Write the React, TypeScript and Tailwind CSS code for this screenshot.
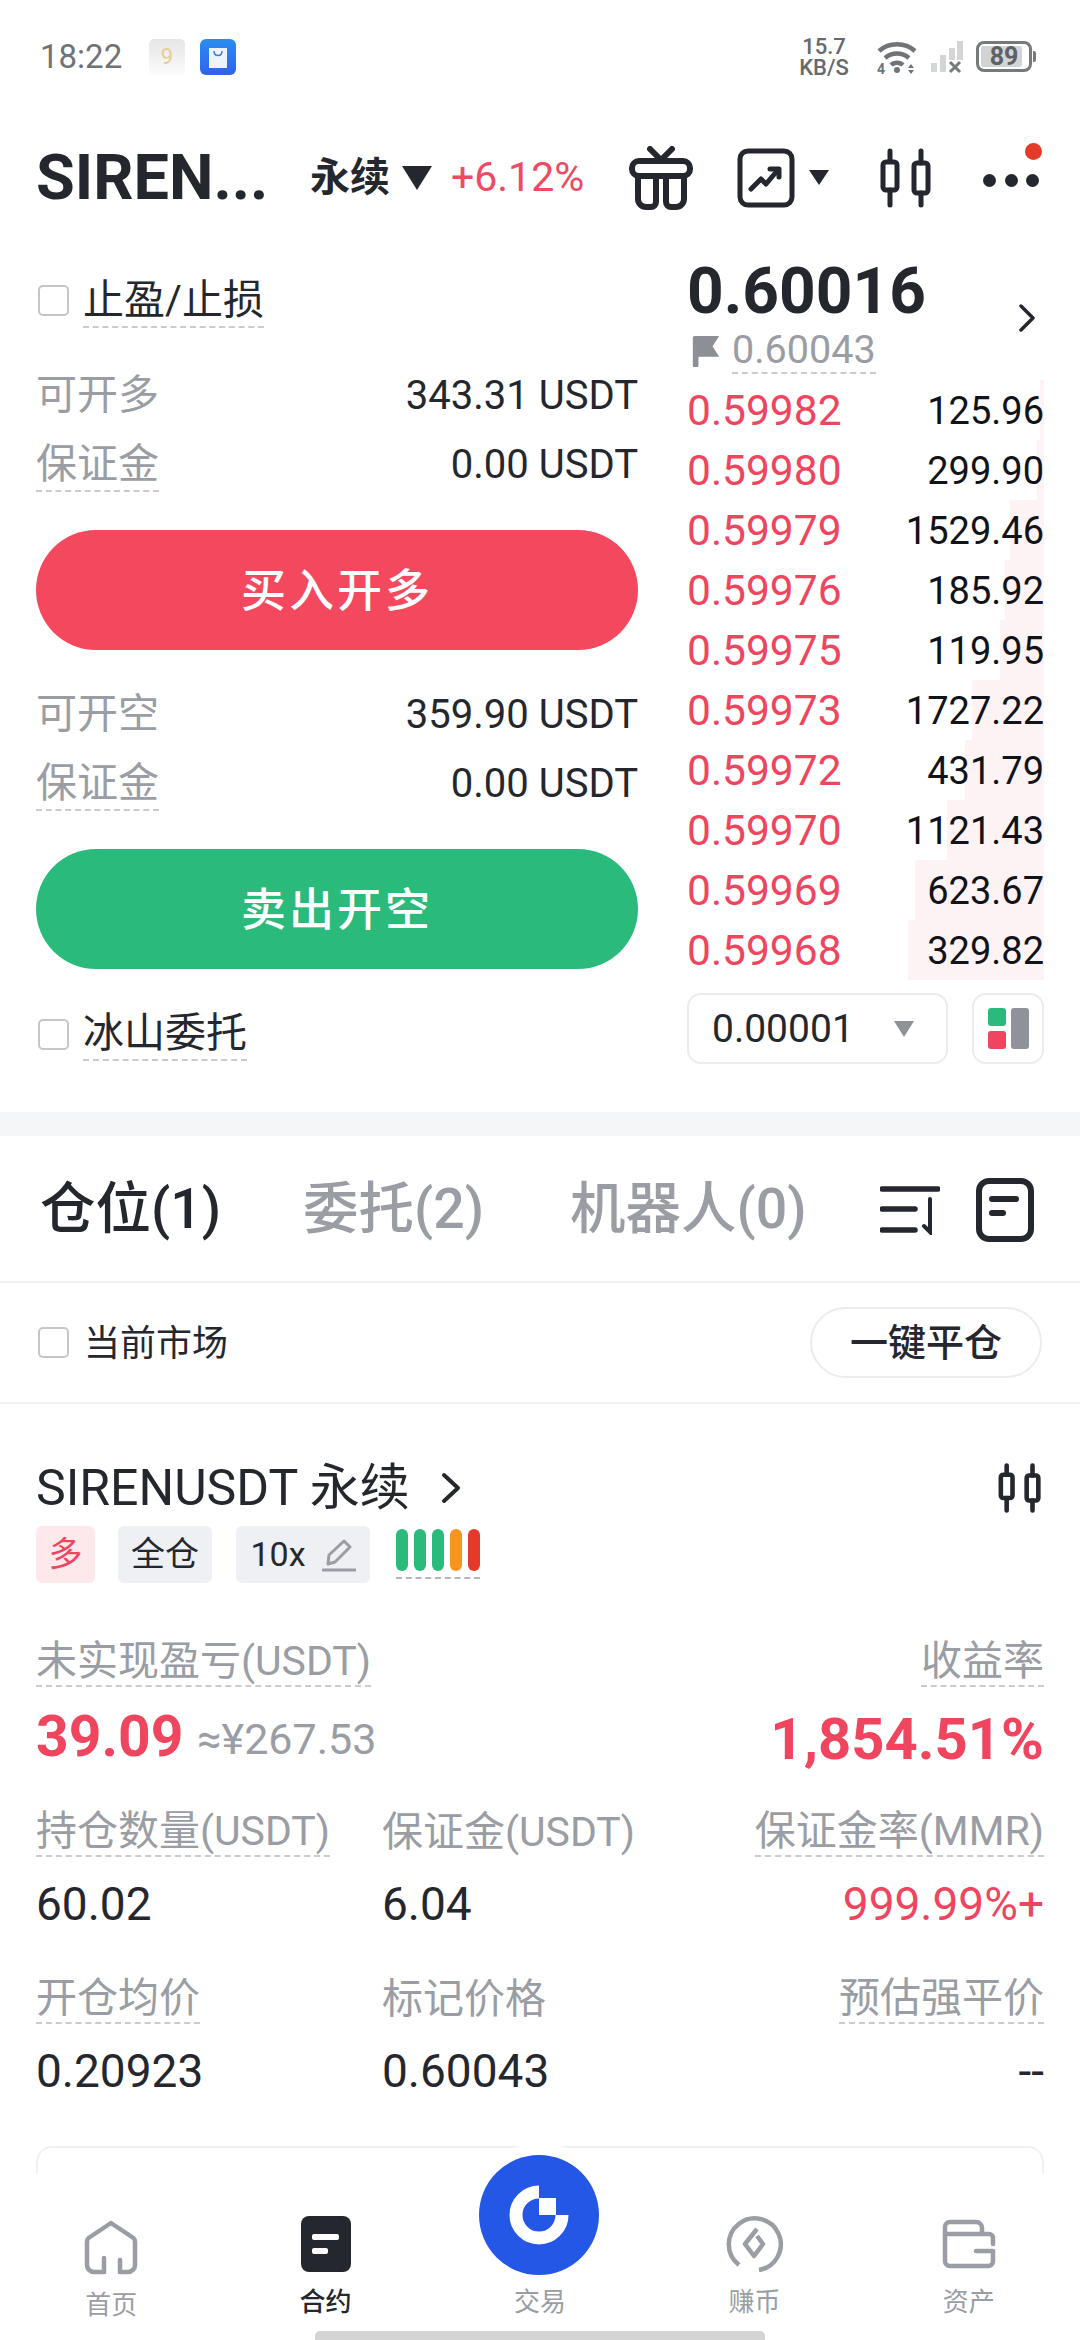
import React from 'react';

const asks = [
  { price: '0.59982', size: '125.96', depth: 4 },
  { price: '0.59980', size: '299.90', depth: 7 },
  { price: '0.59979', size: '1529.46', depth: 34 },
  { price: '0.59976', size: '185.92', depth: 39 },
  { price: '0.59975', size: '119.95', depth: 44 },
  { price: '0.59973', size: '1727.22', depth: 72 },
  { price: '0.59972', size: '431.79', depth: 79 },
  { price: '0.59970', size: '1121.43', depth: 97 },
  { price: '0.59969', size: '623.67', depth: 129 },
  { price: '0.59968', size: '329.82', depth: 136 },
];

function Candles({ className, sw = 5 }: { className: string; sw?: number }) {
  return (
    <svg viewBox="0 0 54 60" className={className} fill="none" stroke="#25272e" strokeWidth={sw} strokeLinecap="round" strokeLinejoin="round">
      <path d="M11 3v10M11 42v15M42 3v12M42 45v12" />
      <rect x="4" y="14" width="14" height="28" rx="3" />
      <rect x="35" y="15" width="14" height="30" rx="3" />
    </svg>
  );
}

function Checkbox() {
  return <span className="block h-[31px] w-[31px] shrink-0 rounded-[5px] border-2 border-[#c4c6c9]" />;
}

function Dashed({ children, className = '' }: { children: React.ReactNode; className?: string }) {
  return <span className={`border-b-2 border-dashed border-[#c9cbce] ${className}`}>{children}</span>;
}

function Stat({ label, value, right, red, dashed = true }: { label: string; value: string; right?: boolean; red?: boolean; dashed?: boolean }) {
  return (
    <div className={`flex flex-col ${right ? 'items-end' : 'items-start'}`}>
      <span className="flex h-[48px] items-center">
        {dashed ? (
          <Dashed className="text-[41px] leading-[48px] text-[#9a9da3]">{label}</Dashed>
        ) : (
          <span className="text-[41px] leading-[48px] text-[#9a9da3]">{label}</span>
        )}
      </span>
      <span className={`mt-[23px] h-[50px] text-[46px] leading-[50px] ${red ? 'text-[#f0455f]' : 'text-[#25272e]'}`}>{value}</span>
    </div>
  );
}

function TradeSide({ avail, availLabel, action, color }: { avail: string; availLabel: string; action: string; color: string }) {
  return (
    <>
      <div className="flex h-[70px] items-center justify-between">
        <span className="text-[41px] text-[#9a9da3]">{availLabel}</span>
        <span className="text-[40px] text-[#25272e]">{avail} USDT</span>
      </div>
      <div className="flex h-[68px] items-center justify-between">
        <Dashed className="text-[41px] leading-[52px] text-[#9a9da3]">保证金</Dashed>
        <span className="text-[40px] text-[#25272e]">0.00 USDT</span>
      </div>
      <button className={`mt-[31px] h-[120px] w-full rounded-full pt-[3px] text-[45px] font-medium tracking-[3px] text-white ${color}`}>{action}</button>
    </>
  );
}

function NavItem({ label, active, children, low }: { label: string; active?: boolean; children?: React.ReactNode; low?: boolean }) {
  return (
    <div className="flex flex-col items-center">
      <div className="flex h-[68px] items-center justify-center">{children}</div>
      <span className={`text-[26px] leading-[32px] ${low ? 'mt-[11px]' : 'mt-[8px]'} ${active ? 'font-medium text-[#25272e]' : 'text-[#9a9da3]'}`}>{label}</span>
    </div>
  );
}

export default function App() {
  return (
    <div className="relative h-[2340px] w-[1080px] overflow-hidden bg-white font-[Roboto,'Noto_Sans_CJK_SC',sans-serif] text-[#25272e]">
      {/* status bar */}
      <div className="flex h-[95px] items-center justify-between pl-[40px] pr-[48px] pt-[18px]">
        <div className="flex items-center">
          <span className="w-[109px] text-[33px] text-[#6f7277]">18:22</span>
          <div className="flex h-[36px] w-[36px] items-center justify-center rounded-[5px] bg-gradient-to-b from-[#e6e6e6] to-[#fbfbfb] text-[22px] leading-none text-[#e3cf94]">9</div>
          <div className="ml-[15px] flex h-[36px] w-[36px] items-center justify-center rounded-[6px] bg-gradient-to-b from-[#2b8df0] to-[#2f62e8]">
            <svg viewBox="0 0 20 24" className="h-[24px] w-[20px]">
              <path d="M1 3h18v20H1z" fill="#eef3fb" />
              <path d="M6 6c0 6 8 6 8 0" stroke="#3a78e8" strokeWidth="1.5" fill="none" />
            </svg>
          </div>
        </div>
        <div className="flex items-center">
          <div className="flex w-[54px] flex-col items-center text-[22px] font-medium leading-[21px] text-[#66696e]">
            <span>15.7</span>
            <span>KB/S</span>
          </div>
          <div className="relative ml-[26px] h-[34px] w-[40px]">
            <svg viewBox="0 0 40 34" className="h-[34px] w-[40px]" fill="none" stroke="#707378" strokeWidth="4.5">
              <path d="M2 11c10-9 26-9 36 0M8 18c7-6 17-6 24 0M14 25c3-3 9-3 12 0" />
              <circle cx="20" cy="30" r="3" fill="#707378" stroke="none" />
              <path d="M34 24l3 4h-6zM34 34l3-4h-6z" fill="#707378" stroke="none" />
            </svg>
            <span className="absolute bottom-[-2px] left-0 text-[14px] font-bold leading-none text-[#707378]">4</span>
          </div>
          <svg viewBox="0 0 34 34" className="ml-[13px] h-[34px] w-[34px]">
            <rect x="1" y="23" width="6" height="9" fill="#d4d5d7" />
            <rect x="10" y="15" width="6" height="17" fill="#d4d5d7" />
            <rect x="19" y="8" width="6" height="12" fill="#d4d5d7" />
            <rect x="27" y="1" width="6" height="19" fill="#d4d5d7" />
            <path d="M20 22l10 10M30 22l-10 10" stroke="#77797d" strokeWidth="3" />
          </svg>
          <div className="relative ml-[12px] flex h-[31px] w-[56px] items-center rounded-[8px] border-[3px] border-[#77797d] p-[2px]">
            <div className="h-full w-[89%] rounded-[3px] bg-[#d2d3d5]" />
            <span className="absolute inset-0 flex items-center justify-center text-[25px] font-bold leading-none text-[#5e6065]">89</span>
            <span className="absolute -right-[7px] top-[7px] h-[11px] w-[3px] rounded-r-[2px] bg-[#77797d]" />
          </div>
        </div>
      </div>

      {/* symbol header */}
      <div className="flex h-[145px] items-center pl-[36px] pt-[20px]">
        <span className="w-[274px] text-[63px] font-bold leading-none">SIREN...</span>
        <span className="text-[40px] font-bold">永续</span>
        <svg viewBox="0 0 30 24" className="ml-[12px] h-[24px] w-[30px]"><path d="M0 0h30L15 24z" fill="#25272e" /></svg>
        <span className="ml-[19px] w-[176px] text-[41px] text-[#ee4a64]">+6.12%</span>
        <svg viewBox="0 0 64 64" className="ml-[2px] h-[64px] w-[64px]" fill="none" stroke="#25272e" strokeWidth="6" strokeLinecap="round" strokeLinejoin="round">
          <path d="M21 3l11 11 11-11" />
          <rect x="3" y="15" width="58" height="15" rx="7" />
          <path d="M9 30v23a8 8 0 0 0 8 8h5a5 5 0 0 0 5-5V30M55 30v23a8 8 0 0 1-8 8h-5a5 5 0 0 1-5-5V30" />
        </svg>
        <svg viewBox="0 0 58 60" className="ml-[44px] h-[60px] w-[58px]" fill="none" stroke="#25272e" strokeWidth="5" strokeLinejoin="round" strokeLinecap="round">
          <rect x="3" y="3" width="52" height="54" rx="8" />
          <path d="M14 41l10-10 5 5 11-13" />
          <path d="M33 21h9v8" />
        </svg>
        <svg viewBox="0 0 20 15" className="ml-[14px] h-[15px] w-[20px]"><path d="M0 0h20L10 15z" fill="#25272e" /></svg>
        <Candles className="ml-[50px] h-[60px] w-[54px]" />
        <div className="relative ml-[50px] mt-[6px] flex h-[14px] w-[56px] items-center justify-between">
          <i className="block h-[13px] w-[13px] rounded-full bg-[#25272e]" />
          <i className="block h-[13px] w-[13px] rounded-full bg-[#25272e]" />
          <i className="block h-[13px] w-[13px] rounded-full bg-[#25272e]" />
          <i className="absolute -top-[31px] right-[-3px] block h-[17px] w-[17px] rounded-full bg-[#e53a2a]" />
        </div>
      </div>

      {/* order form and book */}
      <div className="flex h-[872px] justify-between pl-[36px] pr-[36px]">
        <div className="w-[602px]">
          <div className="flex h-[121px] items-center gap-[14px] pl-[2px]">
            <Checkbox />
            <Dashed className="text-[41px] leading-[52px]">止盈/止损</Dashed>
          </div>
          <TradeSide availLabel="可开多" avail="343.31" action="买入开多" color="bg-[#f4485f]" />
          <div className="mt-[30px]">
            <TradeSide availLabel="可开空" avail="359.90" action="卖出开空" color="bg-[#2abb7c]" />
          </div>
          <div className="flex h-[130px] items-center gap-[14px] pl-[2px]">
            <Checkbox />
            <Dashed className="text-[41px] leading-[52px]">冰山委托</Dashed>
          </div>
        </div>

        <div className="w-[357px]">
          <div className="flex h-[94px] items-end justify-between">
            <span className="text-[64px] font-bold leading-[84px]">0.60016</span>
            <svg viewBox="0 0 18 28" className="mb-[2px] mr-[8px] h-[28px] w-[18px]" fill="none" stroke="#25272e" strokeWidth="3.5" strokeLinecap="round" strokeLinejoin="round">
              <path d="M3 2l12 12L3 26" />
            </svg>
          </div>
          <div className="flex h-[46px] items-center pb-[12px]">
            <svg viewBox="0 0 28 34" className="ml-[5px] h-[32px] w-[28px]" fill="#8c8f96">
              <path d="M0 3a2 2 0 0 1 2-2h26l-7 11 7 11H6v9a3 3 0 0 1-6 0z" />
            </svg>
            <Dashed className="ml-[12px] text-[39.500px] leading-[44px] text-[#9a9da3]">0.60043</Dashed>
          </div>
          {asks.map((row) => (
            <div key={row.price} className="relative flex h-[60px] items-center justify-between pt-[2px]">
              <div className="absolute inset-y-0 right-0 bg-[#fdf3f4]" style={{ width: row.depth }} />
              <span className="relative text-[42.500px] text-[#f0455f]">{row.price}</span>
              <span className="relative text-[38px] text-[#111319]">{row.size}</span>
            </div>
          ))}
          <div className="mt-[13px] flex justify-between">
            <div className="flex h-[71px] w-[261px] items-center justify-between rounded-[14px] border-2 border-[#ebecee] pl-[23px] pr-[32px]">
              <span className="pt-[2px] text-[39px]">0.00001</span>
              <svg viewBox="0 0 20 16" className="h-[16px] w-[20px]"><path d="M0 0h20L10 16z" fill="#8f9298" /></svg>
            </div>
            <div className="flex h-[71px] w-[72px] items-center justify-center gap-[5px] rounded-[14px] border-2 border-[#ebecee]">
              <div className="flex flex-col gap-[5px]">
                <span className="block h-[18px] w-[18px] rounded-[3px] bg-[#2abb7c]" />
                <span className="block h-[18px] w-[18px] rounded-[3px] bg-[#f0455f]" />
              </div>
              <span className="block h-[41px] w-[18px] rounded-[3px] bg-[#8f9298]" />
            </div>
          </div>
        </div>
      </div>

      <div className="h-[24px] bg-[#f5f6f8]" />

      {/* position tabs */}
      <div className="flex h-[147px] items-center border-b-2 border-[#f0f1f2] pl-[40px] pr-[46px] pt-[3px]">
        <span className="w-[263px] text-[55.500px] font-medium">仓位(1)</span>
        <span className="w-[267px] text-[55.500px] font-medium text-[#9a9da3]">委托(2)</span>
        <span className="w-[310px] text-[55.500px] font-medium text-[#9a9da3]">机器人(0)</span>
        <svg viewBox="0 0 60 50" className="h-[50px] w-[60px]" fill="none" stroke="#25272e" strokeWidth="5.5" strokeLinecap="round">
          <path d="M2 4h56M2 24h33M2 45h33" />
          <path d="M50 14v33l-6-6" strokeWidth="4" />
        </svg>
        <svg viewBox="0 0 58 64" className="ml-[36px] h-[64px] w-[58px]" fill="none" stroke="#25272e" strokeWidth="6" strokeLinecap="round">
          <rect x="3" y="3" width="52" height="58" rx="10" />
          <path d="M16 21h24M16 35h11" />
        </svg>
      </div>

      <div className="flex h-[121px] items-center justify-between border-b-2 border-[#f0f1f2] pl-[38px] pr-[38px]">
        <div className="flex items-center gap-[15px]">
          <Checkbox />
          <span className="pt-[3px] text-[36px]">当前市场</span>
        </div>
        <button className="h-[71px] w-[232px] rounded-full border-2 border-[#ebecee] pt-[2px] text-[38px] font-medium">一键平仓</button>
      </div>

      {/* open position card */}
      <div className="px-[36px] pt-[56px]">
        <div className="flex h-[56px] items-center justify-between">
          <div className="flex items-center">
            <span className="text-[50px] leading-none">SIRENUSDT 永续</span>
            <svg viewBox="0 0 20 32" className="ml-[31px] h-[32px] w-[20px]" fill="none" stroke="#25272e" strokeWidth="4" strokeLinecap="round" strokeLinejoin="round">
              <path d="M3 3l14 13L3 29" />
            </svg>
          </div>
          <Candles className="h-[50px] w-[48px]" sw={5.5} />
        </div>
        <div className="mt-[10px] flex h-[57px] items-center">
          <span className="flex h-[57px] w-[59px] items-center justify-center rounded-[6px] bg-[#fde9ec] text-[34px] text-[#f0455f]">多</span>
          <span className="ml-[23px] flex h-[57px] w-[94px] items-center justify-center rounded-[6px] bg-[#eef0f3] text-[34px]">全仓</span>
          <span className="ml-[24px] flex h-[57px] w-[134px] items-center justify-center gap-[16px] rounded-[6px] bg-[#eef0f3] text-[34px]">
            10x
            <svg viewBox="0 0 34 34" className="h-[34px] w-[34px]" fill="none" stroke="#9a9da3" strokeWidth="3" strokeLinejoin="round" strokeLinecap="round">
              <path d="M7 17L22 3l6 6-15 15-7 2z" />
              <path d="M1 32h32" />
            </svg>
          </span>
          <div className="ml-[26px] flex h-[53px] gap-[6px] self-start border-b-2 border-dashed border-[#b5b7ba] pt-[3px]">
            <span className="block h-[42px] w-[12px] rounded-full bg-[#2abb7c]" />
            <span className="block h-[42px] w-[12px] rounded-full bg-[#2abb7c]" />
            <span className="block h-[42px] w-[12px] rounded-full bg-[#2abb7c]" />
            <span className="block h-[42px] w-[12px] rounded-full bg-[#f7941d]" />
            <span className="block h-[42px] w-[12px] rounded-full bg-[#e53a2a]" />
          </div>
        </div>

        <div className="mt-[54px] flex items-start justify-between">
          <div>
            <Dashed className="text-[41px] leading-[48px] text-[#9a9da3]">未实现盈亏(USDT)</Dashed>
            <div className="mt-[22px] flex items-end">
              <span className="text-[57px] font-bold leading-[60px] text-[#f0455f]">39.09</span>
              <span className="ml-[14px] text-[43px] leading-[56px] text-[#9a9da3]">≈¥267.53</span>
            </div>
          </div>
          <div className="flex flex-col items-end">
            <Dashed className="text-[41px] leading-[48px] text-[#9a9da3]">收益率</Dashed>
            <span className="mt-[22px] text-[58px] font-bold leading-[60px] text-[#f0455f]">1,854.51%</span>
          </div>
        </div>

        <div className="mt-[39px] grid grid-cols-[346px_1fr_auto]">
          <Stat label="持仓数量(USDT)" value="60.02" />
          <Stat label="保证金(USDT)" value="6.04" dashed={false} />
          <Stat label="保证金率(MMR)" value="999.99%+" right red />
        </div>
        <div className="mt-[46px] grid grid-cols-[346px_1fr_auto]">
          <Stat label="开仓均价" value="0.20923" />
          <Stat label="标记价格" value="0.60043" dashed={false} />
          <Stat label="预估强平价" value="--" right />
        </div>

        <div className="mt-[50px] h-[60px] rounded-t-[16px] border-2 border-b-0 border-[#eff0f2]" />
      </div>

      {/* bottom navigation */}
      <div className="absolute inset-x-0 bottom-0 h-[167px] bg-white">
        <div className="absolute left-[468px] top-[-30px] h-[144px] w-[144px] rounded-full bg-white" />
        <div className="absolute left-[479px] top-[-18px] flex h-[120px] w-[120px] items-center justify-center rounded-full bg-[#2557e6]">
          <svg viewBox="-30 -30 60 60" className="h-[60px] w-[60px]">
            <path d="M23 0A23 23 0 1 1 0-23" fill="none" stroke="#fff" strokeWidth="13" />
            <rect x="0" y="-17" width="17" height="17" fill="#fff" />
          </svg>
        </div>
        <div className="grid grid-cols-5 px-[4px] pt-[37px]">
          <NavItem label="首页" low>
            <svg viewBox="0 0 54 56" className="mt-[8px] h-[56px] w-[54px]" fill="none" stroke="#9a9da3" strokeWidth="4.5" strokeLinejoin="round" strokeLinecap="round">
              <path d="M20 52h-10a7 7 0 0 1-7-7V22a5 5 0 0 1 1.500-4L27 3l22.500 15a5 5 0 0 1 1.500 4v23a7 7 0 0 1-7 7H36" />
              <path d="M20 52V38M36 52V40" />
            </svg>
          </NavItem>
          <NavItem label="合约" active>
            <div className="flex h-[56px] w-[50px] flex-col items-center justify-center gap-[8px] rounded-[8px] bg-[#25272e]">
              <span className="block h-[6px] w-[27px] rounded-[2px] bg-white" />
              <span className="ml-[11px] block h-[6px] w-[16px] self-start rounded-[2px] bg-white" />
            </div>
          </NavItem>
          <NavItem label="交易" />
          <NavItem label="赚币">
            <svg viewBox="0 0 58 58" className="h-[58px] w-[58px]" fill="none" stroke="#9a9da3" strokeWidth="4.5" strokeLinejoin="round">
              <path d="M14 50A26 26 0 1 1 34 55" />
              <path d="M32 14l-12 15 9 12 9-12-6-8" />
            </svg>
          </NavItem>
          <NavItem label="资产">
            <svg viewBox="0 0 54 50" className="h-[50px] w-[54px]" fill="none" stroke="#9a9da3" strokeWidth="4.5" strokeLinejoin="round" strokeLinecap="round">
              <path d="M3 15V8a5 5 0 0 1 5-5h26a6 6 0 0 1 6 6v6" />
              <path d="M3 15h44a4 4 0 0 1 4 4v6M3 15v27a5 5 0 0 0 5 5h38a5 5 0 0 0 5-5V32H34" />
            </svg>
          </NavItem>
        </div>
        <div className="absolute bottom-0 left-[315px] h-[9px] w-[450px] rounded-t-[5px] bg-[#d4d4d4]" />
      </div>
    </div>
  );
}
